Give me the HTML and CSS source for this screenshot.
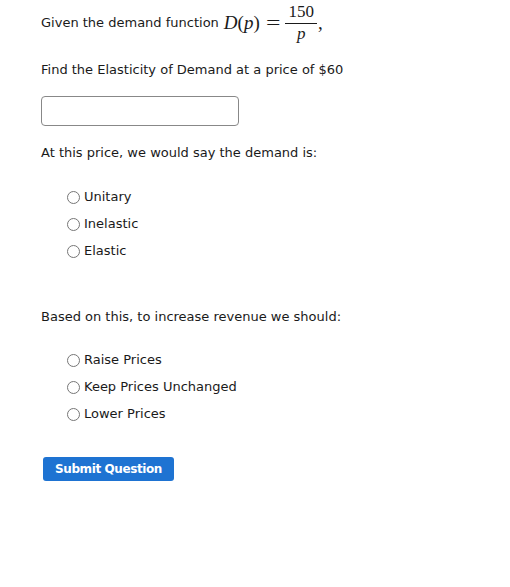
FILE: index.html
```html
<!DOCTYPE html>
<html lang="en">
<head>
    <meta charset="UTF-8">
    <title>Problem</title>
    <link rel="stylesheet" href="styles.css">
</head>
<body>
    <div class="problem">
        <p class="intro">Given the demand function
            <span class="math">
                <span class="lhs"><i>D</i>(<i>p</i>)</span>
                <span class="eq">=</span>
                <span class="frac"><span class="num">150</span><span class="den"><i>p</i></span></span>
                <span class="comma">,</span>
            </span>
        </p>

        <p class="find">Find the Elasticity of Demand at a price of $60</p>
        <input type="text" class="answer">

        <p class="ask">At this price, we would say the demand is:</p>
        <div class="choices">
            <label><input type="radio" name="demand"> Unitary</label>
            <label><input type="radio" name="demand"> Inelastic</label>
            <label><input type="radio" name="demand"> Elastic</label>
        </div>

        <p class="ask second">Based on this, to increase revenue we should:</p>
        <div class="choices">
            <label><input type="radio" name="revenue"> Raise Prices</label>
            <label><input type="radio" name="revenue"> Keep Prices Unchanged</label>
            <label><input type="radio" name="revenue"> Lower Prices</label>
        </div>

        <button type="button" class="submit">Submit Question</button>
    </div>
</body>
</html>
```

FILE: styles.css
```css
* {
    margin: 0;
    padding: 0;
    box-sizing: border-box;
}

body {
    background: white;
    color: #1a1a1a;
    font-family: "DejaVu Sans", sans-serif;
    font-size: 13px;
    line-height: 16px;
}

.problem {
    padding: 0 0 0 41px;
}

.intro {
    display: flex;
    align-items: center;
    height: 46px;
}

.math {
    display: inline-flex;
    align-items: center;
    font-family: "Liberation Serif", serif;
    font-size: 19px;
    margin-left: 5px;
}

.eq {
    display: inline-block;
    margin: 0 7px 0 8px;
    transform: scaleX(1.35);
}

.frac {
    display: inline-flex;
    flex-direction: column;
    align-items: center;
}

.frac .num {
    font-size: 17px;
    padding: 0 3px 3px;
    border-bottom: 1px solid #1a1a1a;
    line-height: 17px;
}

.frac .den {
    font-size: 17px;
    line-height: 20px;
}

.comma {
    margin-left: 1px;
}

.find {
    margin-top: 16px;
}

.answer {
    display: block;
    width: 198px;
    height: 30px;
    margin-top: 18px;
    border: 1px solid #888;
    border-radius: 4px;
}

.ask {
    margin-top: 19px;
}

.ask.second {
    margin-top: 50px;
}

.choices {
    display: flex;
    flex-direction: column;
    gap: 11px;
    margin: 28px 0 0 25px;
}

.ask.second + .choices {
    margin-top: 27px;
}

.choices label {
    display: flex;
    align-items: center;
}

.choices input {
    width: 13px;
    height: 13px;
    margin: 0 4px 0 1px;
}

.submit {
    margin: 35px 0 0 2px;
    padding: 4px 12px;
    background: #1e73d2;
    color: white;
    border: none;
    border-radius: 3px;
    font-family: "DejaVu Sans", sans-serif;
    font-size: 12px;
    line-height: 16px;
    font-weight: bold;
    letter-spacing: -0.4px;
}
```
